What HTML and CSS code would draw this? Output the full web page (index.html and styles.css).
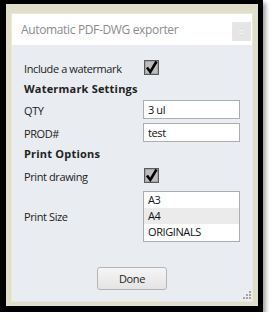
FILE: index.html
```html
<!DOCTYPE html>
<html>
<head>
<meta charset="utf-8">
<link rel="stylesheet" href="styles.css">
</head>
<body>
<div class="frame">
  <div class="window">
    <div class="titlebar">
      <span class="title">Automatic PDF-DWG exporter</span>
      <div class="close"><span class="close-line"></span><span class="close-line"></span></div>
    </div>
    <div class="content">
      <div class="row check-row">
        <span class="label">Include a watermark</span>
        <svg class="checkbox" viewBox="0 0 15 15" width="15" height="15">
          <rect x="0.5" y="0.5" width="14" height="14" fill="#bdbdbd" stroke="#5a5a5a"/>
          <rect x="1.5" y="1.5" width="12" height="12" fill="none" stroke="#a4a4a4"/>
          <path d="M3 7.5 L6.3 12 L12.5 1.5" fill="none" stroke="#000" stroke-width="2.6" stroke-linejoin="miter"/>
        </svg>
      </div>
      <div class="heading first-heading">Watermark Settings</div>
      <div class="row field-row qty-row">
        <span class="label">QTY</span>
        <div class="input">3 ul</div>
      </div>
      <div class="row field-row prod-row">
        <span class="label">PROD#</span>
        <div class="input">test</div>
      </div>
      <div class="heading second-heading">Print Options</div>
      <div class="row check-row print-row">
        <span class="label">Print drawing</span>
        <svg class="checkbox" viewBox="0 0 15 15" width="15" height="15">
          <rect x="0.5" y="0.5" width="14" height="14" fill="#bdbdbd" stroke="#5a5a5a"/>
          <rect x="1.5" y="1.5" width="12" height="12" fill="none" stroke="#a4a4a4"/>
          <path d="M3 7.5 L6.3 12 L12.5 1.5" fill="none" stroke="#000" stroke-width="2.6" stroke-linejoin="miter"/>
        </svg>
      </div>
      <div class="row size-row">
        <span class="label">Print Size</span>
        <div class="listbox">
          <div class="item">A3</div>
          <div class="item hover">A4</div>
          <div class="item">ORIGINALS</div>
        </div>
      </div>
      <div class="button-row">
        <div class="button">Done</div>
      </div>
      <svg class="grip" viewBox="0 0 9 9" width="9" height="9">
        <rect x="7" y="1" width="2" height="2" fill="#a3a3a3"/>
        <rect x="4" y="4" width="2" height="2" fill="#a3a3a3"/>
        <rect x="7" y="4" width="2" height="2" fill="#a3a3a3"/>
        <rect x="1" y="7" width="2" height="2" fill="#a3a3a3"/>
        <rect x="4" y="7" width="2" height="2" fill="#a3a3a3"/>
        <rect x="7" y="7" width="2" height="2" fill="#a3a3a3"/>
      </svg>
    </div>
  </div>
</div>
</body>
</html>
```

FILE: styles.css
```css
html, body {
  margin: 0;
  padding: 0;
  background: #ffffff;
}

body {
  font-family: "Open Sans", "Noto Sans", sans-serif;
  font-size: 11px;
  letter-spacing: -0.4px;
  color: #222222;
}

.frame {
  box-sizing: border-box;
  width: 263px;
  height: 312px;
  border-style: solid;
  border-color: #000000;
  border-width: 4px 5px 6px 6px;
  background: #dedecb;
  padding: 10px 6px 5px 6px;
  box-shadow: 3px 3px 4px rgba(0, 0, 0, 0.35);
}

.window {
  width: 240px;
  height: 287px;
  display: flex;
  flex-direction: column;
  box-shadow: 0 0 0 1px #e9e9da;
}

.titlebar {
  height: 31px;
  flex: none;
  background: #ffffff;
  display: flex;
  align-items: flex-start;
  justify-content: space-between;
}

.title {
  font-size: 12px;
  letter-spacing: -0.35px;
  line-height: 31px;
  color: #8b8b8b;
  padding-left: 9px;
}

.close {
  width: 19px;
  height: 19px;
  margin-top: 8px;
  margin-right: 1px;
  background: #e5e5e5;
  display: flex;
  flex-direction: column;
  align-items: center;
  justify-content: center;
  gap: 2px;
}

.close-line {
  display: block;
  width: 5px;
  height: 1px;
  background: #f1f1f1;
}

.content {
  flex: 1;
  background: #e9ecf0;
  padding: 15px 12px 0 12px;
  position: relative;
}

.row {
  display: flex;
}

.label {
  width: 119px;
  flex: none;
  line-height: 16px;
}

.check-row {
  height: 16px;
  align-items: flex-start;
}

.check-row .label {
  padding-top: 1px;
}

.checkbox {
  display: block;
  margin-left: 1px;
}

.heading {
  font-weight: bold;
  letter-spacing: 0.2px;
  line-height: 16px;
}

.first-heading {
  margin-top: 5px;
}

.second-heading {
  margin-top: 4px;
}

.field-row {
  height: 19px;
  align-items: flex-start;
}

.field-row .label {
  padding-top: 3px;
}

.qty-row {
  margin-top: 3px;
}

.prod-row {
  margin-top: 4px;
}

.input {
  box-sizing: border-box;
  width: 97px;
  height: 19px;
  border: 1px solid #abadb3;
  background: #ffffff;
  padding-left: 4px;
  line-height: 17px;
  color: #111111;
}

.print-row {
  margin-top: 6px;
}

.size-row {
  margin-top: 7px;
  align-items: center;
}

.listbox {
  box-sizing: border-box;
  width: 97px;
  height: 51px;
  border: 1px solid #abadb3;
  background: #ffffff;
}

.item {
  height: 16px;
  line-height: 16px;
  padding-left: 4px;
  color: #111111;
}

.item.hover {
  background: #ebebeb;
}

.button-row {
  display: flex;
  justify-content: center;
  margin-top: 25px;
}

.button {
  box-sizing: border-box;
  width: 70px;
  height: 23px;
  border: 1px solid #b4b4b4;
  border-radius: 3px;
  background: linear-gradient(#f5f5f5, #e4e4e4);
  text-align: center;
  line-height: 21px;
  color: #222222;
}

.grip {
  position: absolute;
  right: 1px;
  bottom: 2px;
  display: block;
}
```
